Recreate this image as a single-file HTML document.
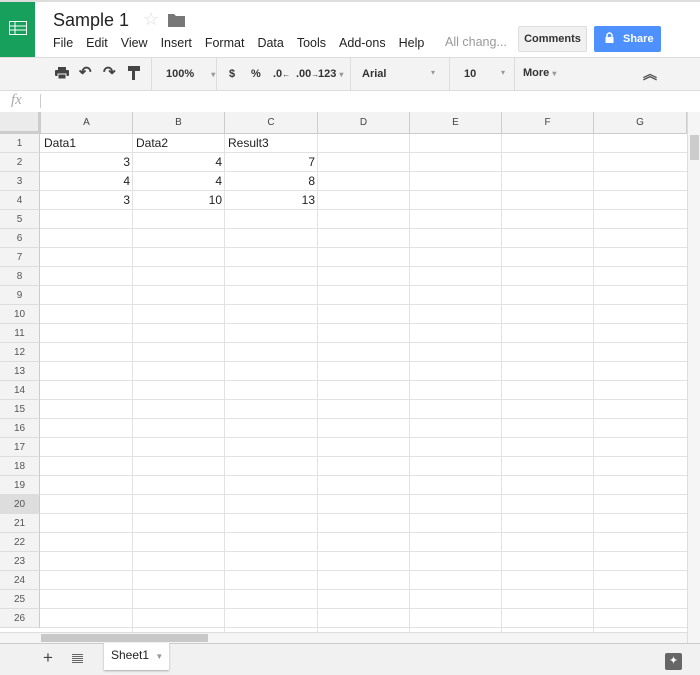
<!DOCTYPE html>
<html><head><meta charset="utf-8"><style>
*{margin:0;padding:0;box-sizing:border-box}
body{width:700px;height:675px;overflow:hidden;background:#fff;font-family:"Liberation Sans",Arial,sans-serif;position:relative}
.a{position:absolute}
.menu span{margin-right:13px}
.tb{font-size:11px;font-weight:bold;color:#333}
.rh{position:absolute;left:0;width:40px;height:19px;font-size:10px;color:#555;text-align:center;line-height:19px;background:#f3f3f3;border-right:1px solid #ccc;border-bottom:1px solid #ddd}
.ch{position:absolute;top:112px;height:22px;font-size:10px;color:#444;text-align:center;line-height:22px;background:#f3f3f3;border-right:1px solid #ccc;border-bottom:1px solid #ccc}
.c{position:absolute;font-size:12px;color:#222;height:19px;line-height:19px}
</style></head><body>
<div class="a" style="left:0;top:0;width:700px;height:2px;background:#ddd"></div>
<div class="a" style="left:0;top:2px;width:35px;height:55px;background:#16a05b"></div>
<svg class="a" style="left:9px;top:21px" width="18" height="14"><rect x="0.5" y="0.5" width="17" height="13" fill="none" stroke="#fff"/><line x1="0" y1="5" x2="18" y2="5" stroke="#fff"/><line x1="0" y1="9" x2="18" y2="9" stroke="#fff"/><line x1="6" y1="0" x2="6" y2="14" stroke="#fff"/></svg>
<div class="a" style="left:53px;top:10px;font-size:18px;color:#222">Sample 1</div>
<div class="a" style="left:143px;top:9px;font-size:18px;color:#ddd">☆</div>
<svg class="a" style="left:168px;top:13px" width="17" height="14"><path d="M0 1h6l2 2h9v11H0z" fill="#777"/></svg>
<div class="a menu" style="left:53px;top:36px;font-size:12.5px;color:#222;white-space:nowrap"><span>File</span><span>Edit</span><span>View</span><span>Insert</span><span>Format</span><span>Data</span><span>Tools</span><span>Add-ons</span><span>Help</span></div>
<div class="a" style="left:445px;top:35px;font-size:12.5px;color:#999">All chang...</div>
<div class="a" style="left:518px;top:26px;width:69px;height:26px;background:#f1f1f1;border:1px solid #ddd;border-radius:2px;font-size:11px;font-weight:bold;color:#333;text-align:center;line-height:24px">Comments</div>
<div class="a" style="left:594px;top:26px;width:67px;height:26px;background:#4d90fe;border-radius:2px;font-size:11px;font-weight:bold;color:#fff;line-height:26px;padding-left:29px">Share</div>
<svg class="a" style="left:605px;top:32px" width="9" height="11"><path d="M2 5V3.5a2.5 2.5 0 0 1 5 0V5" fill="none" stroke="#fff" stroke-width="1.5"/><rect x="0.5" y="5" width="8" height="6" fill="#fff"/></svg>
<div class="a" style="left:0;top:57px;width:700px;height:34px;background:#f3f3f3;border-top:1px solid #ddd;border-bottom:1px solid #ddd"></div>
<svg class="a" style="left:55px;top:67px" width="14" height="12"><rect x="3" y="0" width="8" height="3" fill="#444"/><rect x="0" y="3" width="14" height="6" rx="1" fill="#444"/><rect x="3" y="7" width="8" height="5" fill="#444" stroke="#f3f3f3"/></svg>
<div class="a tb" style="left:79px;top:63px;font-size:15px;color:#444">↶</div>
<div class="a tb" style="left:103px;top:63px;font-size:15px;color:#444">↷</div>
<svg class="a" style="left:128px;top:66px" width="12" height="14"><rect x="0" y="0" width="12" height="5" fill="#444"/><rect x="4" y="5" width="3" height="9" fill="#444"/></svg>
<div class="a" style="left:151px;top:58px;width:1px;height:32px;background:#ddd"></div>
<div class="a tb" style="left:166px;top:68px">100% <span style="color:#999;margin-left:14px;font-size:8px">▾</span></div>
<div class="a" style="left:216px;top:58px;width:1px;height:32px;background:#ddd"></div>
<div class="a tb" style="left:229px;top:68px">$</div>
<div class="a tb" style="left:251px;top:68px">%</div>
<div class="a tb" style="left:273px;top:68px">.0<span style="font-size:8px">←</span></div>
<div class="a tb" style="left:296px;top:68px">.00<span style="font-size:8px">→</span></div>
<div class="a tb" style="left:318px;top:68px">123 <span style="color:#999;font-size:8px">▾</span></div>
<div class="a" style="left:350px;top:58px;width:1px;height:32px;background:#ddd"></div>
<div class="a tb" style="left:362px;top:68px">Arial</div>
<div class="a" style="left:431px;top:68px;font-size:8px;color:#999">▾</div>
<div class="a" style="left:449px;top:58px;width:1px;height:32px;background:#ddd"></div>
<div class="a tb" style="left:464px;top:68px">10</div>
<div class="a" style="left:501px;top:68px;font-size:8px;color:#999">▾</div>
<div class="a" style="left:514px;top:58px;width:1px;height:32px;background:#ddd"></div>
<div class="a tb" style="left:523px;top:67px">More <span style="color:#999;font-size:8px">▾</span></div>
<div class="a tb" style="left:643px;top:64px;font-size:14px;color:#555">︽</div>
<div class="a" style="left:11px;top:92px;font-size:15px;font-style:italic;color:#aaa;font-family:'Liberation Serif',serif">fx</div>
<div class="a" style="left:40px;top:94px;width:1px;height:14px;background:#ccc"></div>
<div class="a" style="left:0;top:112px;width:687px;height:1px;background:#ccc"></div>
<div class="a" style="left:40px;top:134px;width:647px;height:498px;background:repeating-linear-gradient(to bottom,transparent 0,transparent 18px,#e2e2e2 18px,#e2e2e2 19px)"></div>
<div class="a" style="left:132px;top:134px;width:1px;height:498px;background:#e2e2e2"></div>
<div class="a" style="left:224px;top:134px;width:1px;height:498px;background:#e2e2e2"></div>
<div class="a" style="left:317px;top:134px;width:1px;height:498px;background:#e2e2e2"></div>
<div class="a" style="left:409px;top:134px;width:1px;height:498px;background:#e2e2e2"></div>
<div class="a" style="left:501px;top:134px;width:1px;height:498px;background:#e2e2e2"></div>
<div class="a" style="left:593px;top:134px;width:1px;height:498px;background:#e2e2e2"></div>
<div class="ch" style="left:0;width:41px;background:#ebebeb;border-right:3px solid #ccc;border-bottom:3px solid #ccc"></div>
<div class="ch" style="left:41px;width:92px">A</div>
<div class="ch" style="left:133px;width:92px">B</div>
<div class="ch" style="left:225px;width:93px">C</div>
<div class="ch" style="left:318px;width:92px">D</div>
<div class="ch" style="left:410px;width:92px">E</div>
<div class="ch" style="left:502px;width:92px">F</div>
<div class="ch" style="left:594px;width:93px">G</div>
<div class="rh" style="top:134px">1</div><div class="rh" style="top:153px">2</div><div class="rh" style="top:172px">3</div><div class="rh" style="top:191px">4</div><div class="rh" style="top:210px">5</div><div class="rh" style="top:229px">6</div><div class="rh" style="top:248px">7</div><div class="rh" style="top:267px">8</div><div class="rh" style="top:286px">9</div><div class="rh" style="top:305px">10</div><div class="rh" style="top:324px">11</div><div class="rh" style="top:343px">12</div><div class="rh" style="top:362px">13</div><div class="rh" style="top:381px">14</div><div class="rh" style="top:400px">15</div><div class="rh" style="top:419px">16</div><div class="rh" style="top:438px">17</div><div class="rh" style="top:457px">18</div><div class="rh" style="top:476px">19</div><div class="rh" style="top:495px;background:#ddd">20</div><div class="rh" style="top:514px">21</div><div class="rh" style="top:533px">22</div><div class="rh" style="top:552px">23</div><div class="rh" style="top:571px">24</div><div class="rh" style="top:590px">25</div><div class="rh" style="top:609px">26</div>
<div class="c" style="left:44px;top:134px">Data1</div>
<div class="c" style="left:136px;top:134px">Data2</div>
<div class="c" style="left:228px;top:134px">Result3</div>
<div class="c" style="left:40px;width:90px;text-align:right;top:153px">3</div>
<div class="c" style="left:133px;width:89px;text-align:right;top:153px">4</div>
<div class="c" style="left:225px;width:90px;text-align:right;top:153px">7</div>
<div class="c" style="left:40px;width:90px;text-align:right;top:172px">4</div>
<div class="c" style="left:133px;width:89px;text-align:right;top:172px">4</div>
<div class="c" style="left:225px;width:90px;text-align:right;top:172px">8</div>
<div class="c" style="left:40px;width:90px;text-align:right;top:191px">3</div>
<div class="c" style="left:133px;width:89px;text-align:right;top:191px">10</div>
<div class="c" style="left:225px;width:90px;text-align:right;top:191px">13</div>
<div class="a" style="left:687px;top:112px;width:13px;height:531px;background:#f5f5f5;border-left:1px solid #ddd"></div>
<div class="a" style="left:690px;top:135px;width:9px;height:25px;background:#ccc"></div>
<div class="a" style="left:0;top:632px;width:687px;height:11px;background:#f5f5f5;border-top:1px solid #ddd"></div>
<div class="a" style="left:41px;top:634px;width:167px;height:8px;background:#c8c8c8"></div>
<div class="a" style="left:0;top:643px;width:700px;height:32px;background:#f1f1f1;border-top:1px solid #ccc"></div>
<div class="a" style="left:43px;top:648px;font-size:17px;color:#444">+</div>
<div class="a" style="left:72px;top:654px;width:11px;height:10px;background:repeating-linear-gradient(#666 0,#666 1px,transparent 1px,transparent 2px)"></div>
<div class="a" style="left:104px;top:643px;width:65px;height:27px;background:#fff;box-shadow:0 1px 2px rgba(0,0,0,.3);font-size:12px;color:#222;line-height:24px;padding-left:7px">Sheet1 <span style="font-size:8px;color:#999;margin-left:3px">▼</span></div>
<div class="a" style="left:665px;top:653px;width:17px;height:17px;background:#666;border-radius:2px;color:#fff;font-size:11px;text-align:center;line-height:17px">✦</div>
</body></html>
